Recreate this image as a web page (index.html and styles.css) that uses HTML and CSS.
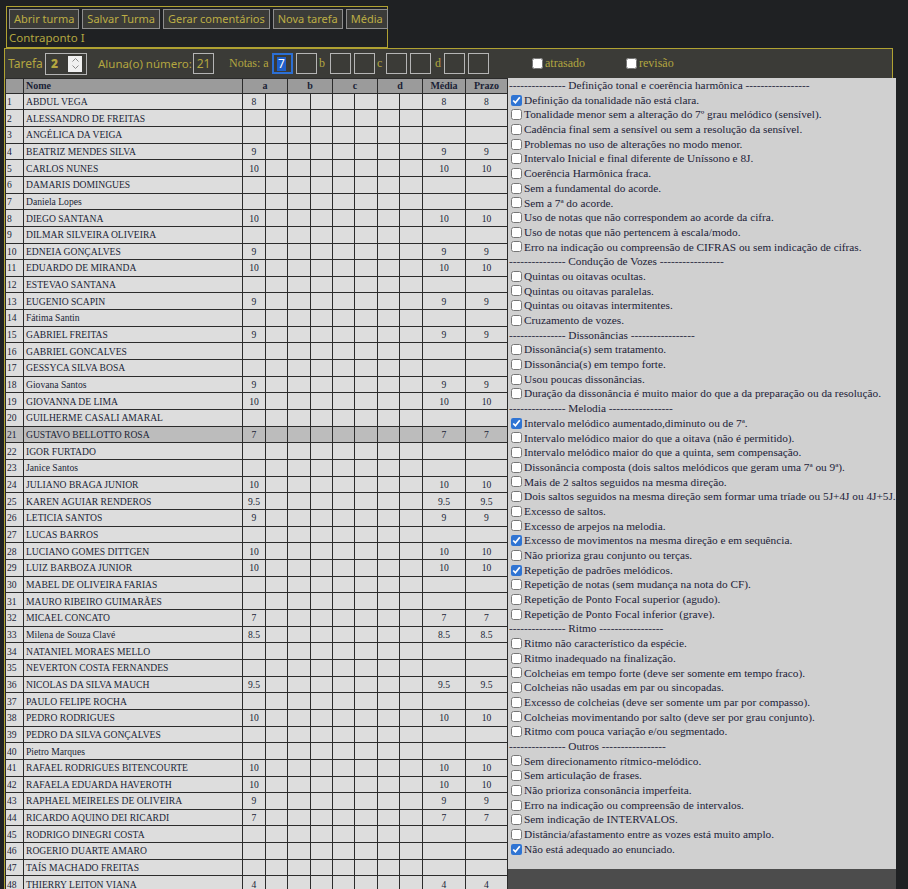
FILE: index.html
```html
<!DOCTYPE html>
<html lang="pt-BR">
<head>
<meta charset="utf-8">
<title>Contraponto I</title>
<link rel="stylesheet" href="styles.css">
</head>
<body>
<div class="topbox">
  <div class="btnrow">
    <button class="btn">Abrir turma</button>
    <button class="btn">Salvar Turma</button>
    <button class="btn">Gerar comentários</button>
    <button class="btn">Nova tarefa</button>
    <button class="btn">Média</button>
  </div>
  <div class="course">Contraponto I</div>
</div>

<div class="panel">
  <div class="toolbar">
    <span class="t-tarefa">Tarefa</span>
    <span class="spinner"><b>2</b><span class="spin"><svg width="9" height="13" viewBox="0 0 9 13"><path d="M1.5 4.5 L4.5 1.5 L7.5 4.5 M1.5 8.5 L4.5 11.5 L7.5 8.5" fill="none" stroke="#8a8a8a" stroke-width="1"/></svg></span></span>
    <span class="t-aluna">Aluna(o) número:</span>
    <span class="box">21</span>
    <span class="t-notas">Notas: a</span>
    <span class="box focus"><span class="sel">7</span></span>
    <span class="box gap"></span>
    <span class="letter">b</span>
    <span class="box"></span>
    <span class="box gap"></span>
    <span class="letter lc">c</span>
    <span class="box"></span>
    <span class="box gap"></span>
    <span class="letter ld">d</span>
    <span class="box"></span>
    <span class="box gap"></span>
    <input type="checkbox" class="tb-check first">
    <span class="t-check t-atrasado">atrasado</span>
    <input type="checkbox" class="tb-check">
    <span class="t-check">revisão</span>
  </div>

  <div class="main">
    <table class="grades">
      <colgroup>
        <col class="w-num"><col class="w-name">
        <col class="w-s1"><col class="w-s2"><col class="w-s1"><col class="w-s2">
        <col class="w-s2"><col class="w-s1"><col class="w-s2"><col class="w-s1">
        <col class="w-med"><col class="w-pra">
      </colgroup>
      <thead>
        <tr><th></th><th class="l">Nome</th><th colspan="2">a</th><th colspan="2">b</th><th colspan="2">c</th><th colspan="2">d</th><th>Média</th><th>Prazo</th></tr>
      </thead>
      <tbody>
        <tr><td>1</td><td>ABDUL VEGA</td><td>8</td><td></td><td></td><td></td><td></td><td></td><td></td><td></td><td>8</td><td>8</td></tr>
        <tr><td>2</td><td>ALESSANDRO DE FREITAS</td><td></td><td></td><td></td><td></td><td></td><td></td><td></td><td></td><td></td><td></td></tr>
        <tr><td>3</td><td>ANGÉLICA DA VEIGA</td><td></td><td></td><td></td><td></td><td></td><td></td><td></td><td></td><td></td><td></td></tr>
        <tr><td>4</td><td>BEATRIZ MENDES SILVA</td><td>9</td><td></td><td></td><td></td><td></td><td></td><td></td><td></td><td>9</td><td>9</td></tr>
        <tr><td>5</td><td>CARLOS NUNES</td><td>10</td><td></td><td></td><td></td><td></td><td></td><td></td><td></td><td>10</td><td>10</td></tr>
        <tr><td>6</td><td>DAMARIS DOMINGUES</td><td></td><td></td><td></td><td></td><td></td><td></td><td></td><td></td><td></td><td></td></tr>
        <tr><td>7</td><td>Daniela Lopes</td><td></td><td></td><td></td><td></td><td></td><td></td><td></td><td></td><td></td><td></td></tr>
        <tr><td>8</td><td>DIEGO SANTANA</td><td>10</td><td></td><td></td><td></td><td></td><td></td><td></td><td></td><td>10</td><td>10</td></tr>
        <tr><td>9</td><td>DILMAR SILVEIRA OLIVEIRA</td><td></td><td></td><td></td><td></td><td></td><td></td><td></td><td></td><td></td><td></td></tr>
        <tr><td>10</td><td>EDNEIA GONÇALVES</td><td>9</td><td></td><td></td><td></td><td></td><td></td><td></td><td></td><td>9</td><td>9</td></tr>
        <tr><td>11</td><td>EDUARDO DE MIRANDA</td><td>10</td><td></td><td></td><td></td><td></td><td></td><td></td><td></td><td>10</td><td>10</td></tr>
        <tr><td>12</td><td>ESTEVAO SANTANA</td><td></td><td></td><td></td><td></td><td></td><td></td><td></td><td></td><td></td><td></td></tr>
        <tr><td>13</td><td>EUGENIO SCAPIN</td><td>9</td><td></td><td></td><td></td><td></td><td></td><td></td><td></td><td>9</td><td>9</td></tr>
        <tr><td>14</td><td>Fátima Santin</td><td></td><td></td><td></td><td></td><td></td><td></td><td></td><td></td><td></td><td></td></tr>
        <tr><td>15</td><td>GABRIEL FREITAS</td><td>9</td><td></td><td></td><td></td><td></td><td></td><td></td><td></td><td>9</td><td>9</td></tr>
        <tr><td>16</td><td>GABRIEL GONCALVES</td><td></td><td></td><td></td><td></td><td></td><td></td><td></td><td></td><td></td><td></td></tr>
        <tr><td>17</td><td>GESSYCA SILVA BOSA</td><td></td><td></td><td></td><td></td><td></td><td></td><td></td><td></td><td></td><td></td></tr>
        <tr><td>18</td><td>Giovana Santos</td><td>9</td><td></td><td></td><td></td><td></td><td></td><td></td><td></td><td>9</td><td>9</td></tr>
        <tr><td>19</td><td>GIOVANNA DE LIMA</td><td>10</td><td></td><td></td><td></td><td></td><td></td><td></td><td></td><td>10</td><td>10</td></tr>
        <tr><td>20</td><td>GUILHERME CASALI AMARAL</td><td></td><td></td><td></td><td></td><td></td><td></td><td></td><td></td><td></td><td></td></tr>
        <tr class="selected"><td>21</td><td>GUSTAVO BELLOTTO ROSA</td><td>7</td><td></td><td></td><td></td><td></td><td></td><td></td><td></td><td>7</td><td>7</td></tr>
        <tr><td>22</td><td>IGOR FURTADO</td><td></td><td></td><td></td><td></td><td></td><td></td><td></td><td></td><td></td><td></td></tr>
        <tr><td>23</td><td>Janice Santos</td><td></td><td></td><td></td><td></td><td></td><td></td><td></td><td></td><td></td><td></td></tr>
        <tr><td>24</td><td>JULIANO BRAGA JUNIOR</td><td>10</td><td></td><td></td><td></td><td></td><td></td><td></td><td></td><td>10</td><td>10</td></tr>
        <tr><td>25</td><td>KAREN AGUIAR RENDEROS</td><td>9.5</td><td></td><td></td><td></td><td></td><td></td><td></td><td></td><td>9.5</td><td>9.5</td></tr>
        <tr><td>26</td><td>LETICIA SANTOS</td><td>9</td><td></td><td></td><td></td><td></td><td></td><td></td><td></td><td>9</td><td>9</td></tr>
        <tr><td>27</td><td>LUCAS BARROS</td><td></td><td></td><td></td><td></td><td></td><td></td><td></td><td></td><td></td><td></td></tr>
        <tr><td>28</td><td>LUCIANO GOMES DITTGEN</td><td>10</td><td></td><td></td><td></td><td></td><td></td><td></td><td></td><td>10</td><td>10</td></tr>
        <tr><td>29</td><td>LUIZ BARBOZA JUNIOR</td><td>10</td><td></td><td></td><td></td><td></td><td></td><td></td><td></td><td>10</td><td>10</td></tr>
        <tr><td>30</td><td>MABEL DE OLIVEIRA FARIAS</td><td></td><td></td><td></td><td></td><td></td><td></td><td></td><td></td><td></td><td></td></tr>
        <tr><td>31</td><td>MAURO RIBEIRO GUIMARÃES</td><td></td><td></td><td></td><td></td><td></td><td></td><td></td><td></td><td></td><td></td></tr>
        <tr><td>32</td><td>MICAEL CONCATO</td><td>7</td><td></td><td></td><td></td><td></td><td></td><td></td><td></td><td>7</td><td>7</td></tr>
        <tr><td>33</td><td>Milena de Souza Clavé</td><td>8.5</td><td></td><td></td><td></td><td></td><td></td><td></td><td></td><td>8.5</td><td>8.5</td></tr>
        <tr><td>34</td><td>NATANIEL MORAES MELLO</td><td></td><td></td><td></td><td></td><td></td><td></td><td></td><td></td><td></td><td></td></tr>
        <tr><td>35</td><td>NEVERTON COSTA FERNANDES</td><td></td><td></td><td></td><td></td><td></td><td></td><td></td><td></td><td></td><td></td></tr>
        <tr><td>36</td><td>NICOLAS DA SILVA MAUCH</td><td>9.5</td><td></td><td></td><td></td><td></td><td></td><td></td><td></td><td>9.5</td><td>9.5</td></tr>
        <tr><td>37</td><td>PAULO FELIPE ROCHA</td><td></td><td></td><td></td><td></td><td></td><td></td><td></td><td></td><td></td><td></td></tr>
        <tr><td>38</td><td>PEDRO RODRIGUES</td><td>10</td><td></td><td></td><td></td><td></td><td></td><td></td><td></td><td>10</td><td>10</td></tr>
        <tr><td>39</td><td>PEDRO DA SILVA GONÇALVES</td><td></td><td></td><td></td><td></td><td></td><td></td><td></td><td></td><td></td><td></td></tr>
        <tr><td>40</td><td>Pietro Marques</td><td></td><td></td><td></td><td></td><td></td><td></td><td></td><td></td><td></td><td></td></tr>
        <tr><td>41</td><td>RAFAEL RODRIGUES BITENCOURTE</td><td>10</td><td></td><td></td><td></td><td></td><td></td><td></td><td></td><td>10</td><td>10</td></tr>
        <tr><td>42</td><td>RAFAELA EDUARDA HAVEROTH</td><td>10</td><td></td><td></td><td></td><td></td><td></td><td></td><td></td><td>10</td><td>10</td></tr>
        <tr><td>43</td><td>RAPHAEL MEIRELES DE OLIVEIRA</td><td>9</td><td></td><td></td><td></td><td></td><td></td><td></td><td></td><td>9</td><td>9</td></tr>
        <tr><td>44</td><td>RICARDO AQUINO DEI RICARDI</td><td>7</td><td></td><td></td><td></td><td></td><td></td><td></td><td></td><td>7</td><td>7</td></tr>
        <tr><td>45</td><td>RODRIGO DINEGRI COSTA</td><td></td><td></td><td></td><td></td><td></td><td></td><td></td><td></td><td></td><td></td></tr>
        <tr><td>46</td><td>ROGERIO DUARTE AMARO</td><td></td><td></td><td></td><td></td><td></td><td></td><td></td><td></td><td></td><td></td></tr>
        <tr><td>47</td><td>TAÍS MACHADO FREITAS</td><td></td><td></td><td></td><td></td><td></td><td></td><td></td><td></td><td></td><td></td></tr>
        <tr><td>48</td><td>THIERRY LEITON VIANA</td><td>4</td><td></td><td></td><td></td><td></td><td></td><td></td><td></td><td>4</td><td>4</td></tr>
      </tbody>
    </table>

    <div class="side">
      <div class="checklist">
        <div class="sec">--------------- Definição tonal e coerência harmônica -----------------</div>
        <label class="item"><input type="checkbox" checked>Definição da tonalidade não está clara.</label>
        <label class="item"><input type="checkbox">Tonalidade menor sem a alteração do 7º grau melódico (sensível).</label>
        <label class="item"><input type="checkbox">Cadência final sem a sensível ou sem a resolução da sensível.</label>
        <label class="item"><input type="checkbox">Problemas no uso de alterações no modo menor.</label>
        <label class="item"><input type="checkbox">Intervalo Inicial e final diferente de Uníssono e 8J.</label>
        <label class="item"><input type="checkbox">Coerência Harmônica fraca.</label>
        <label class="item"><input type="checkbox">Sem a fundamental do acorde.</label>
        <label class="item"><input type="checkbox">Sem a 7ª do acorde.</label>
        <label class="item"><input type="checkbox">Uso de notas que não correspondem ao acorde da cifra.</label>
        <label class="item"><input type="checkbox">Uso de notas que não pertencem à escala/modo.</label>
        <label class="item"><input type="checkbox">Erro na indicação ou compreensão de CIFRAS ou sem indicação de cifras.</label>
        <div class="sec">--------------- Condução de Vozes -----------------</div>
        <label class="item"><input type="checkbox">Quintas ou oitavas ocultas.</label>
        <label class="item"><input type="checkbox">Quintas ou oitavas paralelas.</label>
        <label class="item"><input type="checkbox">Quintas ou oitavas intermitentes.</label>
        <label class="item"><input type="checkbox">Cruzamento de vozes.</label>
        <div class="sec">--------------- Dissonâncias -----------------</div>
        <label class="item"><input type="checkbox">Dissonância(s) sem tratamento.</label>
        <label class="item"><input type="checkbox">Dissonância(s) em tempo forte.</label>
        <label class="item"><input type="checkbox">Usou poucas dissonâncias.</label>
        <label class="item"><input type="checkbox">Duração da dissonância é muito maior do que a da preparação ou da resolução.</label>
        <div class="sec">--------------- Melodia -----------------</div>
        <label class="item"><input type="checkbox" checked>Intervalo melódico aumentado,diminuto ou de 7ª.</label>
        <label class="item"><input type="checkbox">Intervalo melódico maior do que a oitava (não é permitido).</label>
        <label class="item"><input type="checkbox">Intervalo melódico maior do que a quinta, sem compensação.</label>
        <label class="item"><input type="checkbox">Dissonância composta (dois saltos melódicos que geram uma 7ª ou 9ª).</label>
        <label class="item"><input type="checkbox">Mais de 2 saltos seguidos na mesma direção.</label>
        <label class="item"><input type="checkbox">Dois saltos seguidos na mesma direção sem formar uma tríade ou 5J+4J ou 4J+5J.</label>
        <label class="item"><input type="checkbox">Excesso de saltos.</label>
        <label class="item"><input type="checkbox">Excesso de arpejos na melodia.</label>
        <label class="item"><input type="checkbox" checked>Excesso de movimentos na mesma direção e em sequência.</label>
        <label class="item"><input type="checkbox">Não prioriza grau conjunto ou terças.</label>
        <label class="item"><input type="checkbox" checked>Repetição de padrões melódicos.</label>
        <label class="item"><input type="checkbox">Repetição de notas (sem mudança na nota do CF).</label>
        <label class="item"><input type="checkbox">Repetição de Ponto Focal superior (agudo).</label>
        <label class="item"><input type="checkbox">Repetição de Ponto Focal inferior (grave).</label>
        <div class="sec">--------------- Ritmo -----------------</div>
        <label class="item"><input type="checkbox">Ritmo não característico da espécie.</label>
        <label class="item"><input type="checkbox">Ritmo inadequado na finalização.</label>
        <label class="item"><input type="checkbox">Colcheias em tempo forte (deve ser somente em tempo fraco).</label>
        <label class="item"><input type="checkbox">Colcheias não usadas em par ou sincopadas.</label>
        <label class="item"><input type="checkbox">Excesso de colcheias (deve ser somente um par por compasso).</label>
        <label class="item"><input type="checkbox">Colcheias movimentando por salto (deve ser por grau conjunto).</label>
        <label class="item"><input type="checkbox">Ritmo com pouca variação e/ou segmentado.</label>
        <div class="sec">--------------- Outros -----------------</div>
        <label class="item"><input type="checkbox">Sem direcionamento rítmico-melódico.</label>
        <label class="item"><input type="checkbox">Sem articulação de frases.</label>
        <label class="item"><input type="checkbox">Não prioriza consonância imperfeita.</label>
        <label class="item"><input type="checkbox">Erro na indicação ou compreensão de intervalos.</label>
        <label class="item"><input type="checkbox">Sem indicação de INTERVALOS.</label>
        <label class="item"><input type="checkbox">Distância/afastamento entre as vozes está muito amplo.</label>
        <label class="item"><input type="checkbox" checked>Não está adequado ao enunciado.</label>
      </div>
    </div>
  </div>
</div>
</body>
</html>
```

FILE: styles.css
```css
* { box-sizing: border-box; }

html, body {
  margin: 0;
  padding: 0;
  background: #1f2123;
}

body {
  width: 908px;
  height: 889px;
  overflow: hidden;
  font-family: "Liberation Serif", serif;
}

/* ---------- top box ---------- */
.topbox {
  margin: 6px 0 0 6px;
  width: 382px;
  height: 42px;
  border: 1px solid #b0a232;
  padding: 2px 2px 0 2px;
}

.btnrow {
  display: flex;
  gap: 3px;
}

.btn {
  flex: none;
  white-space: nowrap;
  height: 20px;
  padding: 0 4px;
  margin: 0;
  background: #3b3b38;
  border: 1px solid #8e8e8e;
  border-radius: 0;
  color: #bdae45;
  font: 11px/18px "Noto Sans", sans-serif;
}

.course {
  color: #b3a640;
  font: 11.5px/16px "Noto Sans", sans-serif;
  margin-top: 1px;
  white-space: nowrap;
}

/* ---------- panel ---------- */
.panel {
  margin-left: 4px;
  width: 889px;
  border: 1px solid #b0a232;
  border-bottom: 0;
  background: #3b3b37;
  height: 842px;
}

.toolbar {
  height: 29px;
  display: flex;
  align-items: center;
  padding-left: 3px;
  color: #b3a640;
  white-space: nowrap;
}

.toolbar > * { flex: none; }

.t-tarefa, .t-aluna {
  font: 12px "Noto Sans", sans-serif;
}

.t-tarefa { width: 37px; }

.spinner {
  width: 42px;
  height: 22px;
  border: 1px solid #b5b5b5;
  display: flex;
  align-items: center;
  padding-left: 5px;
  font: bold 12px "Noto Sans", sans-serif;
}

.spinner b { flex: 1; }

.spin {
  width: 14px;
  height: 16px;
  margin-right: 4px;
  background: #f0f0f0;
  display: flex;
  align-items: center;
  justify-content: center;
}

.t-aluna {
  margin-left: 11px;
  width: 95px;
  font-size: 11.5px;
}

.box {
  width: 21px;
  height: 21px;
  border: 1px solid #b5b5b5;
  display: flex;
  align-items: center;
  justify-content: center;
  font: 12px "Noto Sans", sans-serif;
}

.box.gap { margin-left: 3px; }

.box.focus {
  border: 2px solid #2c6fd4;
  justify-content: flex-start;
  padding-left: 3px;
}

.sel {
  background: #1f5fc9;
  color: #ffffff;
  line-height: 14px;
  padding: 0 1px;
}

.t-notas {
  margin-left: 15px;
  width: 43px;
  font-size: 12px;
}

.letter {
  width: 13px;
  padding-left: 2px;
  font-size: 12px;
}

.letter.lc { width: 11px; }
.letter.ld { width: 13px; padding-left: 4px; }

.tb-check {
  width: 11px;
  height: 11px;
  margin: 0;
}

.tb-check.first { margin-left: 43px; }

.t-check {
  margin-left: 2px;
  font-size: 12px;
}

.t-atrasado { width: 81px; }

/* ---------- main area ---------- */
.main {
  display: flex;
  align-items: flex-start;
}

.grades {
  width: 503px;
  flex: none;
  border-collapse: collapse;
  table-layout: fixed;
  font-size: 9.6px;
  color: #1a1f36;
}

.w-num { width: 18px; }
.w-name { width: 219px; }
.w-s1 { width: 23px; }
.w-s2 { width: 22px; }
.w-med { width: 43px; }
.w-pra { width: 42px; }

.grades th,
.grades td {
  border: 1px solid #2b2b2b;
  padding: 0 1px;
  white-space: nowrap;
  overflow: hidden;
  text-align: center;
  line-height: 13px;
}

.grades th {
  background: #9b9b9b;
  height: 14.6px;
  font-weight: bold;
  font-size: 10px;
}

.grades th.l { text-align: left; padding-left: 2px; }

.grades td {
  background: #dddddd;
  height: 16.67px;
}

.grades td:nth-child(1) { text-align: left; }
.grades td:nth-child(2) { text-align: left; padding-left: 2px; }

.grades tr.selected td { background: #bcbcbc; }

/* ---------- checklist ---------- */
.side {
  flex: 1;
  align-self: stretch;
  background: #4c4c4c;
}

.checklist {
  background: #d0d0d0;
  padding: 0 0 13px 1px;
  font-size: 11.3px;
  line-height: 14.7px;
  color: #1c2238;
}

.sec {
  white-space: nowrap;
  height: 14.7px;
}

.item {
  display: flex;
  align-items: center;
  height: 14.7px;
  white-space: nowrap;
}

.item input {
  width: 11px;
  height: 11px;
  margin: 0 2px 0 2px;
  accent-color: #2f74d3;
  flex: none;
}
```
